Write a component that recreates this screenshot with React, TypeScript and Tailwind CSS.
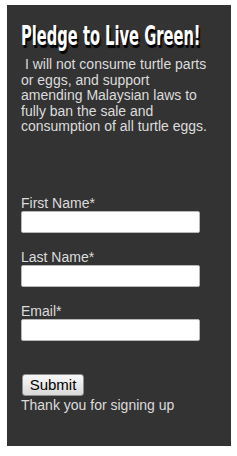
import React from 'react';

const Field: React.FC<{ label: string }> = ({ label }) => (
  <div className="flex flex-col">
    <label className="text-[14px] leading-[16px] text-[#dcdcdc]">{label}</label>
    <input
      type="text"
      className="w-[179px] h-[22px] bg-white border border-[#b8b8b8] rounded-[2px] outline-none"
    />
  </div>
);

export default function App() {
  return (
    <div className="w-[237px] h-[456px] bg-white pt-[5px] pl-[7px]">
      <div
        className="w-[224px] h-[441px] bg-[#333333] pl-[14px] pt-[20px] flex flex-col"
        style={{ fontFamily: '"Liberation Sans", Arial, sans-serif' }}
      >
        <h1
          className="whitespace-nowrap text-[23px] leading-[26px] font-bold text-white [text-shadow:2px_2px_1px_#000] origin-bottom-left scale-x-[0.71] scale-y-[1.12]"
          style={{ fontFamily: '"Liberation Sans Narrow", "DejaVu Sans Condensed", sans-serif' }}
        >
          Pledge to Live Green!
        </h1>
        <p className="mt-[6px] w-[192px] text-[14px] leading-[15.6px] text-[#dcdcdc]">
          &nbsp;I will not consume turtle parts or eggs, and support amending Malaysian laws to fully ban the sale and
          consumption of all turtle eggs.
        </p>

        <form className="mt-[60px] flex flex-col gap-[16px]" onSubmit={(e) => e.preventDefault()}>
          <Field label="First Name*" />
          <Field label="Last Name*" />
          <Field label="Email*" />
        </form>

        <button
          type="button"
          className="mt-[33px] ml-[1px] w-[62px] h-[22px] rounded-[3px] border border-[#8e8e8e] bg-gradient-to-b from-[#f8f8f8] to-[#d9d9d9] text-[15px] leading-[16px] text-black"
        >
          Submit
        </button>
        <p className="mt-[1px] text-[14px] leading-[16px] text-[#dcdcdc]">Thank you for signing up</p>
      </div>
    </div>
  );
}
